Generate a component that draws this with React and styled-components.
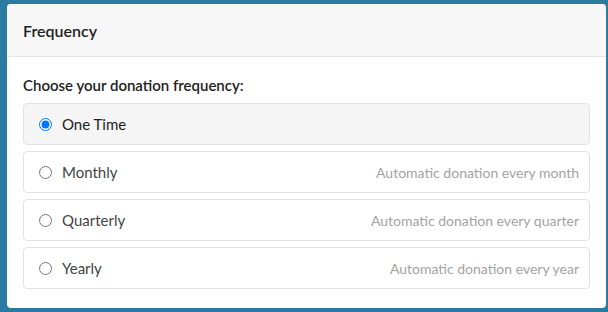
import React, { useState } from 'react'
import styled, { createGlobalStyle } from 'styled-components'

const GlobalStyle = createGlobalStyle`
  html, body {
    margin: 0;
    padding: 0;
    background: #2b7ba0;
  }
  body {
    font-family: Lato, "Noto Sans", sans-serif;
  }
`

const options = [
  { id: 'once', label: 'One Time', note: '' },
  { id: 'monthly', label: 'Monthly', note: 'Automatic donation every month' },
  { id: 'quarterly', label: 'Quarterly', note: 'Automatic donation every quarter' },
  { id: 'yearly', label: 'Yearly', note: 'Automatic donation every year' },
]

const App = () => {
  const [selected, setSelected] = useState('once')

  return (
    <Page>
      <GlobalStyle />
      <Card>
        <Header>Frequency</Header>
        <Body>
          <Prompt>Choose your donation frequency:</Prompt>
          <List>
            {options.map(opt => (
              <Option key={opt.id} $active={selected === opt.id}>
                <Radio
                  type="radio"
                  name="frequency"
                  checked={selected === opt.id}
                  onChange={() => setSelected(opt.id)}
                />
                <Label $active={selected === opt.id}>{opt.label}</Label>
                {opt.note && <Note>{opt.note}</Note>}
              </Option>
            ))}
          </List>
        </Body>
      </Card>
    </Page>
  )
}

export default App

const Page = styled.div`
  padding: 4px 2px 4px 7px;
  height: 312px;
  box-sizing: border-box;
`

const Card = styled.div`
  background: #fff;
  border-radius: 4px;
  overflow: hidden;
  height: 304px;
`

const Header = styled.div`
  height: 53px;
  box-sizing: border-box;
  padding: 0 16px;
  display: flex;
  align-items: center;
  background: #f7f7f7;
  border-bottom: 1px solid #e3e3e3;
  font-size: 16px;
  font-weight: 600;
  color: #222;
`

const Body = styled.div`
  padding: 15px 16px 0 16px;
`

const Prompt = styled.div`
  font-size: 15px;
  font-weight: 600;
  color: #222;
  height: 26px;
  line-height: 26px;
`

const List = styled.div`
  margin-top: 5px;
  display: flex;
  flex-direction: column;
  gap: 6px;
`

const Option = styled.label`
  display: flex;
  align-items: center;
  height: 42px;
  box-sizing: border-box;
  padding: 0 10px 0 15px;
  border: 1px solid #e2e2e2;
  border-radius: 4px;
  background: ${p => (p.$active ? '#f5f5f5' : '#fff')};
  cursor: pointer;
`

const Radio = styled.input`
  margin: 0 10px 0 0;
  width: 13px;
  height: 13px;
  accent-color: #0075ff;
`

const Label = styled.span`
  font-size: 15px;
  color: ${p => (p.$active ? '#222' : '#444')};
`

const Note = styled.span`
  margin-left: auto;
  font-size: 14px;
  color: #a3a3a3;
`
